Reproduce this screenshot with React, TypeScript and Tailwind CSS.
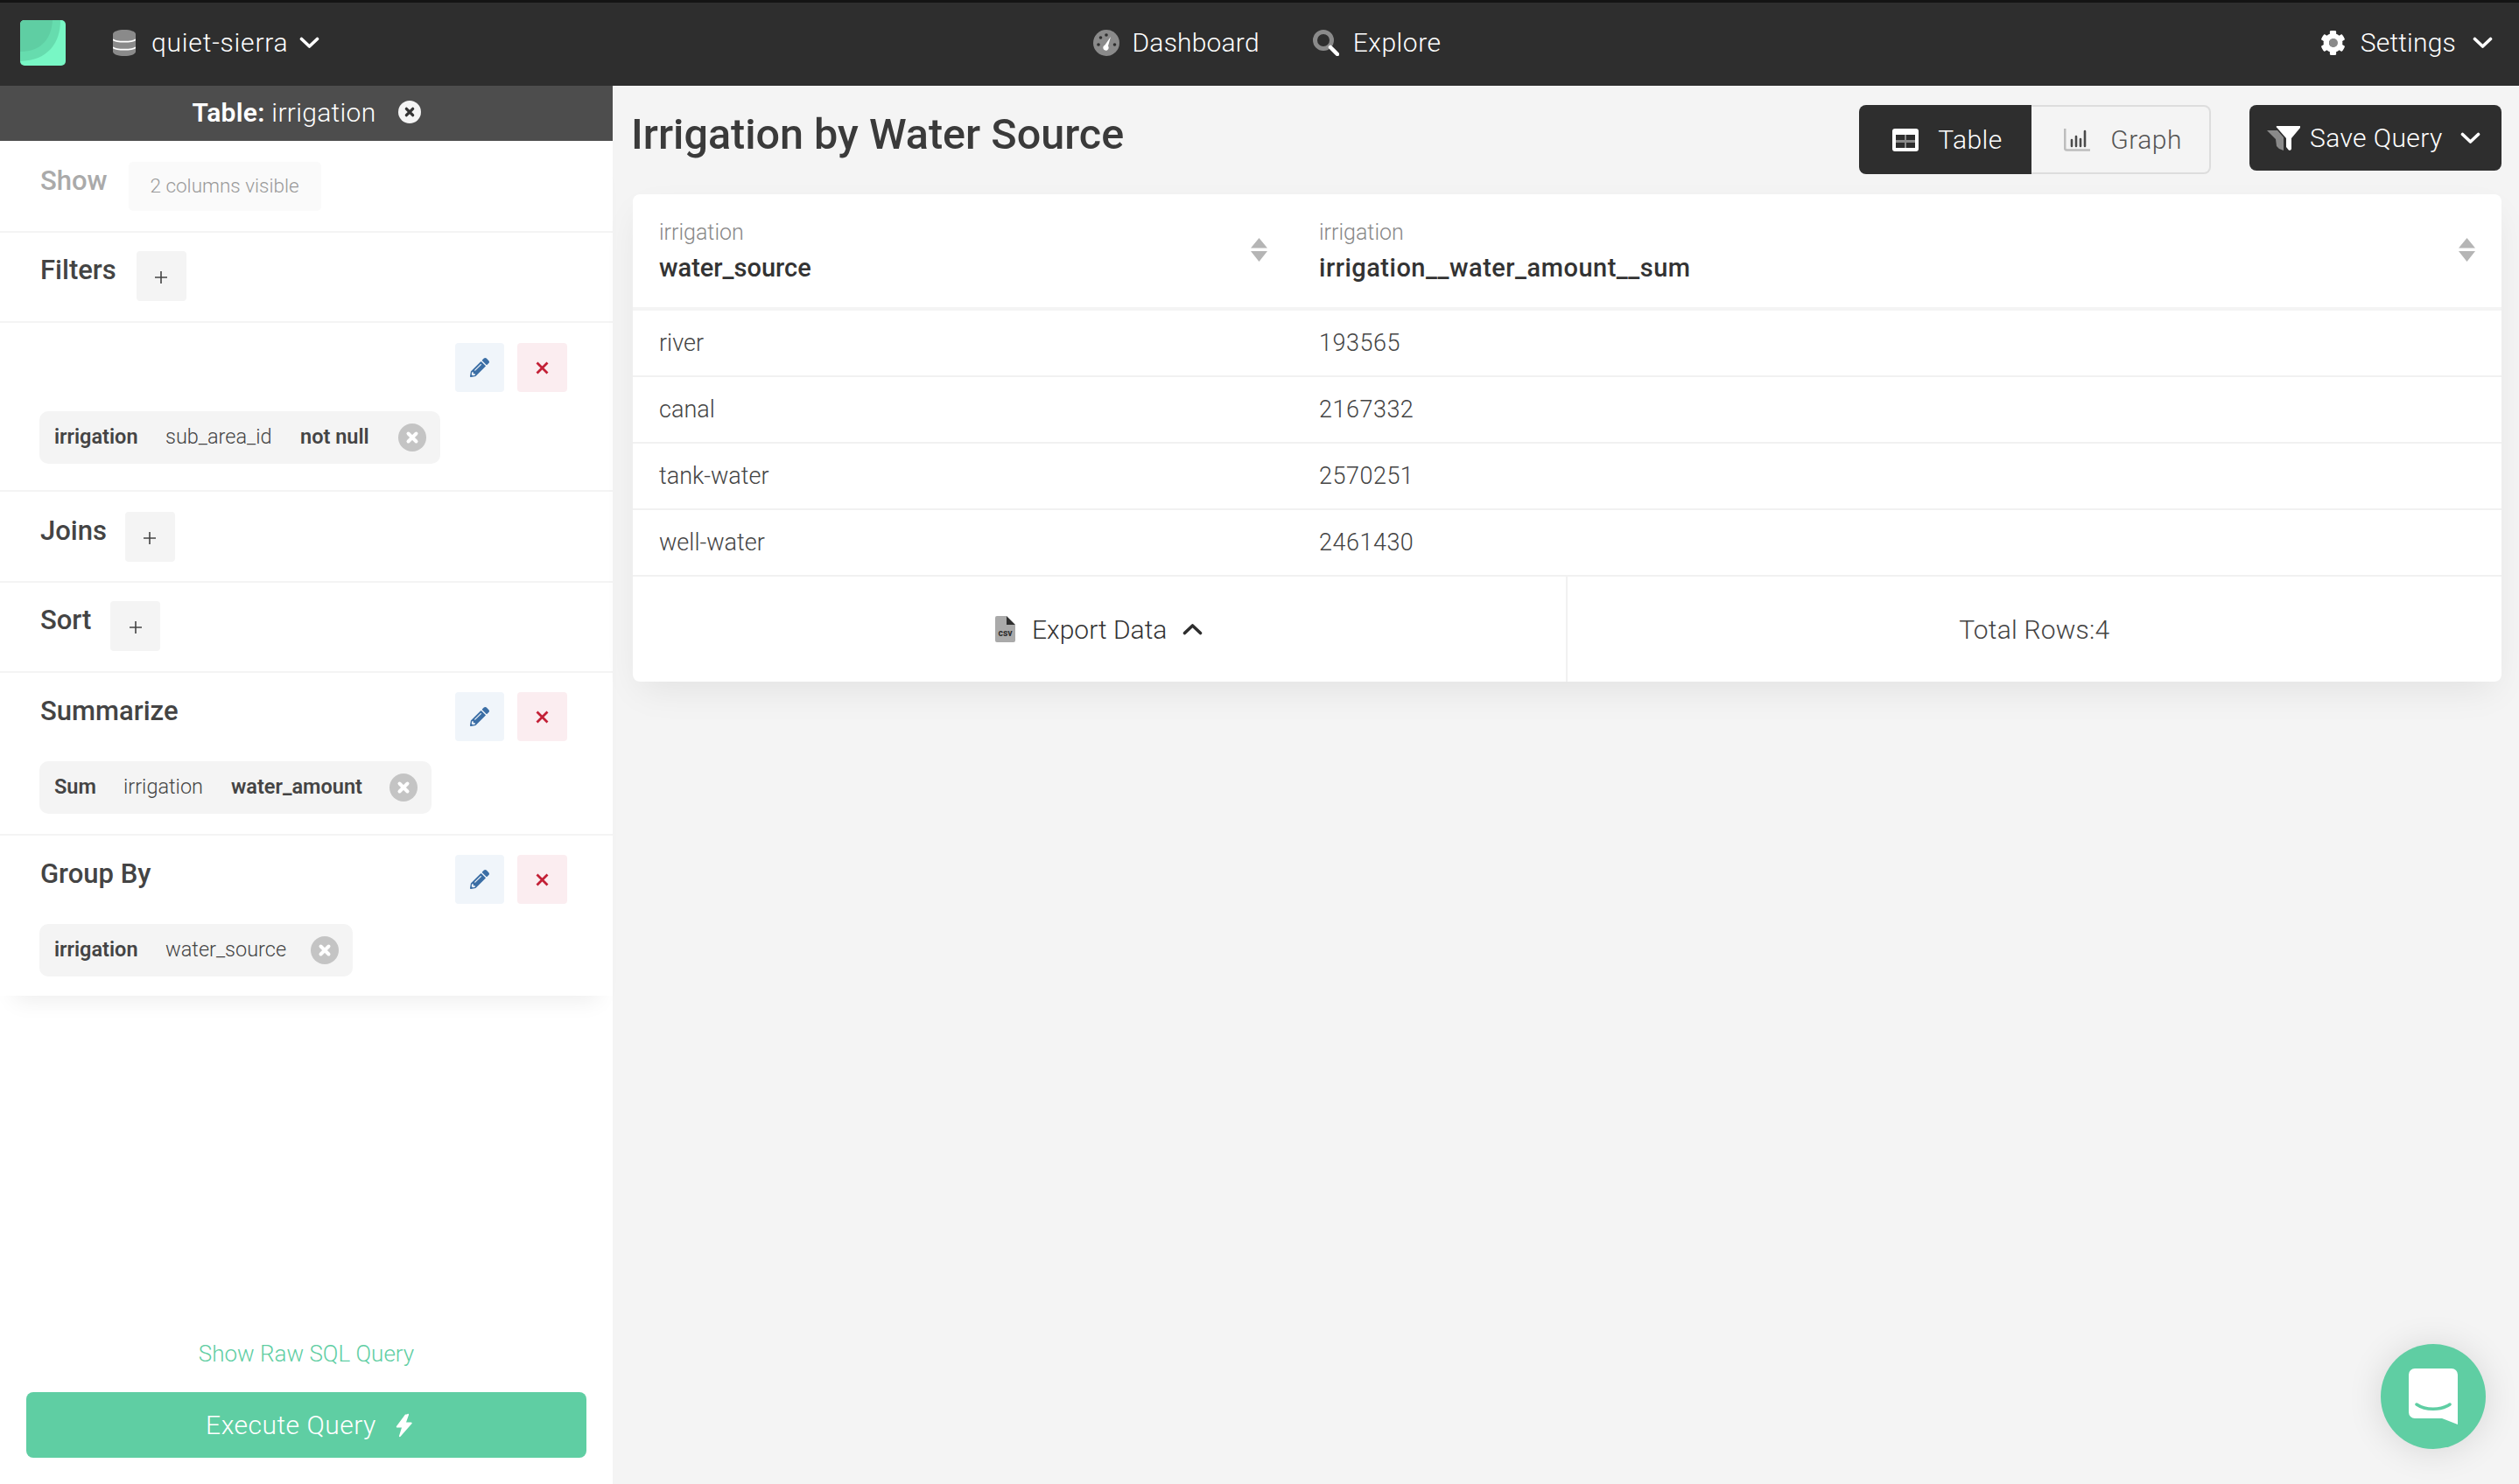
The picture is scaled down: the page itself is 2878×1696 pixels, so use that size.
import React from "react";
import { FaCog, FaPencilAlt } from "react-icons/fa";

const Chevron = ({ up = false, color = "#fff", className = "" }: { up?: boolean; color?: string; className?: string }) => (
  <svg viewBox="0 0 23 14" className={className}>
    <path d={up ? "M2.5 11.5 11.5 3l9 8.5" : "M2.5 2.5l9 8.5 9-8.5"} fill="none" stroke={color} strokeWidth="3.6" strokeLinecap="round" strokeLinejoin="round" />
  </svg>
);

const Logo = () => (
  <svg viewBox="0 0 52 52" className="w-[52px] h-[52px] shrink-0">
    <rect width="52" height="52" rx="5" fill="#78f7c5" />
    <path d="M0 5a5 5 0 0 1 5-5h41c0 26-14 46-46 47z" fill="#66dcae" />
    <path d="M0 5a5 5 0 0 1 5-5h32c-1 20-12 36-37 36z" fill="#5fcea3" />
  </svg>
);

const Database = () => (
  <svg viewBox="0 0 26 30" className="w-[26px] h-[30px] shrink-0">
    <path d="M0 5C0 2 6 0 13 0s13 2 13 5v20c0 3-6 5-13 5S0 28 0 25z" fill="#8a8a8a" />
    <path d="M0 11c3 3.5 23 3.5 26 0M0 20c3 3.5 23 3.5 26 0" fill="none" stroke="#fff" strokeWidth="1.8" />
  </svg>
);

const Gauge = () => (
  <svg viewBox="0 0 30 30" className="w-[30px] h-[30px] shrink-0">
    <circle cx="15" cy="15" r="15" fill="#8a8a8a" />
    <circle cx="6" cy="17" r="1.8" fill="#2e2e2e" />
    <circle cx="8.5" cy="9" r="1.8" fill="#2e2e2e" />
    <circle cx="15" cy="6" r="1.8" fill="#2e2e2e" />
    <circle cx="24.5" cy="17" r="1.8" fill="#2e2e2e" />
    <path d="M20 8l-3 10.5a3.2 3.2 0 1 1-3.6-1z" fill="#fff" />
  </svg>
);

const Search = () => (
  <svg viewBox="0 0 30 30" className="w-[30px] h-[30px] shrink-0">
    <circle cx="12" cy="12" r="9.5" fill="none" stroke="#8a8a8a" strokeWidth="5" />
    <path d="M20 20l8 8" stroke="#fff" strokeWidth="4.5" strokeLinecap="round" />
  </svg>
);

const Gear = () => (
  <span className="relative w-[29px] h-[30px] shrink-0 flex items-center justify-center">
    <FaCog className="w-[30px] h-[30px] text-white" />
    <span className="absolute left-[10px] top-[10px] w-[10px] h-[10px] rounded-full bg-[#8a8a8a]" />
  </span>
);

const TableIcon = () => (
  <svg viewBox="0 0 30 26" className="w-[30px] h-[26px] shrink-0">
    <rect width="30" height="26" rx="3" fill="#fff" />
    <rect x="4" y="7" width="22" height="15" fill="#8a8a8a" />
    <rect x="4" y="7" width="10" height="6" fill="#2e2e2e" />
    <rect x="16" y="7" width="10" height="6" fill="#2e2e2e" />
    <rect x="4" y="16" width="10" height="6" fill="#2e2e2e" />
    <rect x="16" y="16" width="10" height="6" fill="#2e2e2e" />
  </svg>
);

const GraphIcon = () => (
  <svg viewBox="0 0 30 26" className="w-[30px] h-[26px] shrink-0">
    <path d="M1.2 0v22.5a2 2 0 0 0 2 2H30" fill="none" stroke="#bdbdbd" strokeWidth="2.6" />
    <path d="M9 13v7M14 9v11M19 12v8M24 3v17" stroke="#4a4a4a" strokeWidth="2.6" strokeLinecap="round" />
  </svg>
);

const FunnelIcon = () => (
  <svg viewBox="0 0 38 28" className="w-[38px] h-[28px] shrink-0">
    <path d="M0 5h12l7 8v15l-5-2-3-3-1-8z" fill="#8a8a8a" />
    <path d="M12 0h25a1 1 0 0 1 1 2l-10 12v12a2 2 0 0 1-3.4 1.2L22 24V14L11.5 2a1 1 0 0 1 .5-2z" fill="#fff" />
  </svg>
);

const CsvIcon = () => (
  <svg viewBox="0 0 23 30" className="w-[23px] h-[30px] shrink-0">
    <path d="M2 0h11v10h10v18a2 2 0 0 1-2 2H2a2 2 0 0 1-2-2V2a2 2 0 0 1 2-2z" fill="#aaaaaa" />
    <path d="M13 0l10 10H13z" fill="#2e2e2e" />
    <text x="11.5" y="23" textAnchor="middle" fontSize="10.5" fontWeight="700" fill="#2e2e2e" fontFamily="Roboto, sans-serif">csv</text>
  </svg>
);

const Bolt = () => (
  <svg viewBox="0 0 22 28" className="w-[22px] h-[28px] shrink-0">
    <path d="M13 1.5 3 15a1 1 0 0 0 .8 1.6H9L6 26c-.3 1 .8 1.6 1.5.8L20.500 12a1 1 0 0 0-.8-1.600H14l3-8.400c.3-1-.9-1.500-1.600-.8-.8.1-1.700.2-2.400.3z" fill="#fff" />
  </svg>
);

const XCircle = ({ bg = "#c4c4c4", fg = "#fff", size = 32 }: { bg?: string; fg?: string; size?: number }) => (
  <svg viewBox="0 0 32 32" style={{ width: size, height: size }} className="shrink-0">
    <circle cx="16" cy="16" r="16" fill={bg} />
    <path d="M11.500 11.500l9 9M20.500 11.500l-9 9" stroke={fg} strokeWidth="4" strokeLinecap="round" />
  </svg>
);

const SortIcon = () => (
  <svg viewBox="0 0 19 27" className="w-[19px] h-[27px] -mt-[4px]">
    <path d="M9.500 0 19 11.500H0zM0 15h19l-9.500 12z" fill="#b5b5b5" />
  </svg>
);

const PlusButton = () => (
  <button className="w-[57px] h-[57px] rounded-[4px] bg-[#f4f4f4] flex items-center justify-center shrink-0">
    <svg viewBox="0 0 14 14" className="w-[14px] h-[14px] mt-[2px]">
      <path d="M7 0v14M0 7h14" stroke="#444" strokeWidth="1.6" />
    </svg>
  </button>
);

const ActionButtons = () => (
  <div className="flex gap-[15px]">
    <button className="w-[56px] h-[56px] rounded-[4px] bg-[#f0f5fa] flex items-center justify-center">
      <FaPencilAlt className="w-[22px] h-[22px] text-[#3b6ea5]" />
    </button>
    <button className="w-[57px] h-[56px] rounded-[4px] bg-[#fbedf0] flex items-center justify-center">
      <svg viewBox="0 0 15 15" className="w-[15px] h-[15px]">
        <path d="M1.500 1.500l12 12M13.500 1.500l-12 12" stroke="#c32036" strokeWidth="2.800" />
      </svg>
    </button>
  </div>
);

const Chip = ({ parts }: { parts: { t: string; bold?: boolean; w: string }[] }) => (
  <div className="inline-flex items-center h-[60px] rounded-[10px] bg-[#f4f4f4] pl-[17px] pr-[16px] text-[23.5px] text-[#444] self-start">
    {parts.map((p, i) => (
      <span key={i} className={p.w + " " + (p.bold ? "font-semibold" : "font-light") + " whitespace-nowrap"}>
        {p.t}
      </span>
    ))}
    <XCircle />
  </div>
);

const rows = [
  ["river", "193565"],
  ["canal", "2167332"],
  ["tank-water", "2570251"],
  ["well-water", "2461430"],
];

export default function App() {
  return (
    <div className="w-full h-screen overflow-hidden flex flex-col bg-[#f4f4f4] font-['Roboto','Noto_Sans',sans-serif] text-[#444]">
      <header className="h-[98px] shrink-0 bg-[#2e2e2e] border-t-[3px] border-[#141414] pb-[4px] grid grid-cols-[1fr_auto_1fr] items-center text-white text-[30px] font-light">
        <div className="flex items-center pl-[23px]">
          <Logo />
          <span className="ml-[54px]"><Database /></span>
          <span className="ml-[18px] tracking-[0.8px]">quiet-sierra</span>
          <Chevron className="ml-[12px] w-[23px] h-[14px]" />
        </div>
        <nav className="flex items-center pl-[17px]">
          <Gauge />
          <span className="ml-[15px] tracking-[0.2px]">Dashboard</span>
          <span className="ml-[61px]"><Search /></span>
          <span className="ml-[16px] tracking-[0.5px]">Explore</span>
        </nav>
        <div className="flex items-center justify-end pr-[30px]">
          <Gear />
          <span className="ml-[17px] tracking-[0.2px]">Settings</span>
          <Chevron className="ml-[19px] w-[23px] h-[14px]" />
        </div>
      </header>

      <div className="flex-1 flex min-h-0">
        <aside className="w-[700px] shrink-0 bg-white flex flex-col">
          <div className="h-[63px] shrink-0 bg-[#4d4d4d] pb-[3px] flex items-center justify-center gap-[25px] text-white text-[30px] font-light tracking-[0.3px]">
            <span><b className="font-semibold">Table:</b> irrigation</span>
            <XCircle bg="#f4f4f4" fg="#333" size={26} />
          </div>

          <div className="relative flex flex-col shadow-[0_22px_24px_-16px_rgba(0,0,0,0.07)]">
            <section className="h-[105px] border-b-2 border-[#f4f4f4] pl-[46px] pt-[24px] flex gap-[24px]">
              <h3 className="text-[31px] leading-[44px] font-medium text-[#aaa]">Show</h3>
              <div className="w-[220px] h-[56px] rounded-[5px] bg-[#fafafa] flex items-center justify-center text-[22.5px] font-light text-[#999]">2 columns visible</div>
            </section>
            <section className="h-[103px] border-b-2 border-[#f4f4f4] pl-[46px] pt-[21px] flex gap-[23px]">
              <h3 className="text-[31px] leading-[44px] font-medium">Filters</h3>
              <PlusButton />
            </section>
            <section className="h-[193px] border-b-2 border-[#f4f4f4] pl-[45px] pt-[23px] pr-[52px] flex flex-col">
              <div className="flex justify-end"><ActionButtons /></div>
              <div className="mt-[22px] flex">
                <Chip parts={[
                  { t: "irrigation", bold: true, w: "w-[127px]" },
                  { t: "sub_area_id", w: "w-[154px]" },
                  { t: "not null", bold: true, w: "w-[112px]" },
                ]} />
              </div>
            </section>
            <section className="h-[104px] border-b-2 border-[#f4f4f4] pl-[46px] pt-[23px] flex gap-[21px]">
              <h3 className="text-[31px] leading-[44px] font-medium">Joins</h3>
              <PlusButton />
            </section>
            <section className="h-[103px] border-b-2 border-[#f4f4f4] pl-[46px] pt-[21px] flex gap-[22px]">
              <h3 className="text-[31px] leading-[44px] font-medium">Sort</h3>
              <PlusButton />
            </section>
            <section className="h-[186px] border-b-2 border-[#f4f4f4] pl-[45px] pt-[22px] pr-[52px] flex flex-col">
              <div className="flex justify-between items-start">
                <h3 className="text-[31px] leading-[44px] font-medium ml-[1px]">Summarize</h3>
                <ActionButtons />
              </div>
              <div className="mt-[23px] flex">
                <Chip parts={[
                  { t: "Sum", bold: true, w: "w-[79px]" },
                  { t: "irrigation", w: "w-[123px]" },
                  { t: "water_amount", bold: true, w: "w-[181px]" },
                ]} />
              </div>
            </section>
            <section className="h-[183px] pl-[45px] pt-[22px] pr-[52px] flex flex-col">
              <div className="flex justify-between items-start">
                <h3 className="text-[31px] leading-[44px] font-medium ml-[1px]">Group By</h3>
                <ActionButtons />
              </div>
              <div className="mt-[23px] flex">
                <Chip parts={[
                  { t: "irrigation", bold: true, w: "w-[127px]" },
                  { t: "water_source", w: "w-[166px]" },
                ]} />
              </div>
            </section>
          </div>

          <div className="flex-1 flex flex-col justify-end px-[30px] pb-[30px]">
            <p className="text-center text-[26px] font-light text-[#5fcea3] mb-[26px] leading-[36px]">Show Raw SQL Query</p>
            <button className="h-[75px] pl-[7px] rounded-[8px] bg-[#5fcea3] flex items-center justify-center gap-[20px] text-white text-[30px] font-light tracking-[0.5px]">
              Execute Query <Bolt />
            </button>
          </div>
        </aside>

        <main className="flex-1 min-w-0 pl-[23px] pr-[20px] pt-[22px] relative">
          <div className="flex items-start h-[102px]">
            <h1 className="text-[48.5px] leading-[68px] font-medium text-[#3a3a3a] -ml-[2px]">Irrigation by Water Source</h1>
            <div className="ml-auto flex items-start">
              <div className="flex h-[79px] text-[30px] font-light tracking-[0.5px]">
                <button className="w-[197px] pl-[5px] bg-[#2e2e2e] rounded-l-[8px] text-white flex items-center justify-center gap-[22px]">
                  <TableIcon />Table
                </button>
                <button className="w-[205px] pl-[6px] bg-[#f4f4f4] border-2 border-l-0 border-[#dddddd] rounded-r-[8px] text-[#555] flex items-center justify-center gap-[23px]">
                  <GraphIcon />Graph
                </button>
              </div>
              <button className="ml-[44px] w-[288px] h-[75px] rounded-[8px] bg-[#2e2e2e] text-white text-[30px] font-light tracking-[0.4px] flex items-center pl-[20px]">
                <FunnelIcon />
                <span className="ml-[11px]">Save Query</span>
                <Chevron className="ml-[20px] w-[23px] h-[14px]" />
              </button>
            </div>
          </div>

          <div className="bg-white rounded-[8px] shadow-[0_16px_40px_-8px_rgba(0,0,0,0.08)]">
            <div className="h-[127px] pt-[2px] grid grid-cols-[784px_1fr] border-b-[4px] border-[#f4f4f4] box-content">
              <div className="pl-[30px] pr-[59px] flex items-center justify-between">
                <div>
                  <div className="text-[25px] leading-[36px] font-light text-[#888]">irrigation</div>
                  <div className="text-[29px] leading-[44px] font-medium text-[#333]">water_source</div>
                </div>
                <SortIcon />
              </div>
              <div className="pr-[30px] flex items-center justify-between">
                <div>
                  <div className="text-[25px] leading-[36px] font-light text-[#888]">irrigation</div>
                  <div className="text-[29px] leading-[44px] font-medium text-[#333] tracking-[0.5px]">irrigation__water_amount__sum</div>
                </div>
                <SortIcon />
              </div>
            </div>
            {rows.map((r) => (
              <div key={r[0]} className="h-[76px] grid grid-cols-[784px_1fr] items-center border-b-2 border-[#f1f1f1] text-[27px] font-light text-[#444]">
                <span className="pl-[30px]">{r[0]}</span>
                <span className="tracking-[0.5px]">{r[1]}</span>
              </div>
            ))}
            <div className="h-[120px] grid grid-cols-2 text-[30px] font-light text-[#333]">
              <div className="flex items-center justify-center border-r-2 border-[#f1f1f1]">
                <CsvIcon />
                <span className="ml-[19px]">Export Data</span>
                <Chevron up color="#2e2e2e" className="ml-[18px] w-[23px] h-[14px]" />
              </div>
              <div className="flex items-center justify-center text-[#444] tracking-[0.2px]">Total Rows:4</div>
            </div>
          </div>

          <button className="absolute left-[2020px] top-[1438px] w-[120px] h-[120px] rounded-full bg-[#5fcea3] flex items-center justify-center shadow-[0_2px_40px_rgba(0,0,0,0.12)]">
            <svg viewBox="0 0 56 64" className="w-[56px] h-[64px]">
              <path d="M7 0h42a7 7 0 0 1 7 7v57l-18-7H7a7 7 0 0 1-7-7V7a7 7 0 0 1 7-7z" fill="#fff" />
              <path d="M9 41c10 7 28 7 38 0" fill="none" stroke="#5fcea3" strokeWidth="3.500" strokeLinecap="round" />
            </svg>
          </button>
        </main>
      </div>
    </div>
  );
}
